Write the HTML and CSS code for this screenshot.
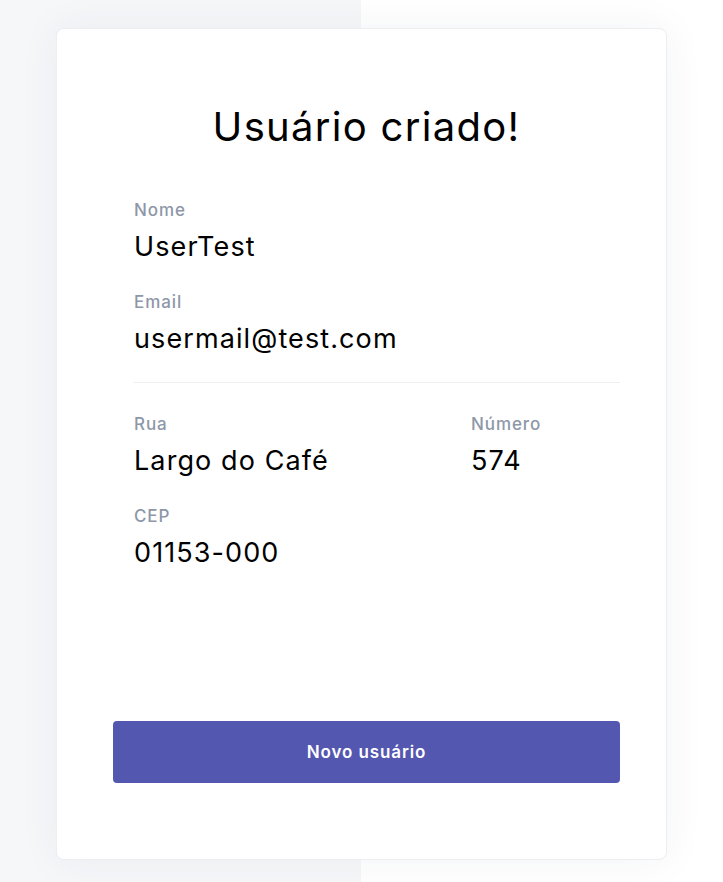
FILE: index.html
```html
<!DOCTYPE html>
<html lang="pt-BR">
  <head>
    <meta charset="utf-8" />
    <title>Usuário criado</title>
    <link rel="stylesheet" href="styles.css">
  </head>
  <body>
    <main class="page">
      <section class="card">
        <h1 class="card-title">Usuário criado!</h1>
        <div class="fields">
          <div class="field">
            <span class="field-label">Nome</span>
            <span class="field-value">UserTest</span>
          </div>
          <div class="field">
            <span class="field-label">Email</span>
            <span class="field-value">usermail@test.com</span>
          </div>
          <hr class="divider" />
          <div class="field-row">
            <div class="field">
              <span class="field-label">Rua</span>
              <span class="field-value">Largo do Café</span>
            </div>
            <div class="field">
              <span class="field-label">Número</span>
              <span class="field-value">574</span>
            </div>
          </div>
          <div class="field">
            <span class="field-label">CEP</span>
            <span class="field-value">01153-000</span>
          </div>
        </div>
        <button class="primary-button">Novo usuário</button>
      </section>
    </main>
  </body>
</html>
```

FILE: styles.css
```css
:root {
    --bg-left: #f6f7f9;
    --bg-right: #ffffff;
    --card-border: #eceef2;
    --label-color: #8e97a8;
    --text-color: #000000;
    --primary: #5357b0;
}

html, body {
    margin: 0;
    padding: 0;
    font-family: "Inter", "Open Sans", sans-serif;
    color: var(--text-color);
    background: linear-gradient(to right, var(--bg-left) 50%, var(--bg-right) 50%);
    min-height: 100vh;
}

.page {
    display: flex;
    justify-content: center;
    padding-top: 28px;
}

.card {
    box-sizing: border-box;
    width: 611px;
    height: 832px;
    background: #fff;
    border: 1px solid var(--card-border);
    border-radius: 8px;
    box-shadow: 0 0 40px rgba(40, 50, 80, 0.06);
    padding: 0 46px 0 56px;
    display: flex;
    flex-direction: column;
}

.card-title {
    margin: 72px 0 0;
    font-size: 40px;
    font-weight: 400;
    letter-spacing: 1.3px;
    line-height: 52px;
    text-align: center;
}

.fields {
    display: flex;
    flex-direction: column;
    padding-left: 21px;
    margin-top: 45px;
}

.field {
    display: flex;
    flex-direction: column;
    margin-bottom: 28px;
}

.field-label {
    font-size: 17px;
    font-weight: 500;
    letter-spacing: 0.9px;
    line-height: 24px;
    color: var(--label-color);
}

/* values keep a fixed box, long descenders get trimmed */
.field-value {
    font-size: 27px;
    letter-spacing: 1.1px;
    line-height: 36px;
    margin-top: 7px;
    height: 33px;
    overflow: hidden;
}

.divider {
    border: 0;
    border-top: 1px solid #eeeff2;
    margin: 0 0 29px;
    width: 100%;
}

.field-row {
    display: grid;
    grid-template-columns: 337px 1fr;
}

.primary-button {
    margin-top: auto;
    margin-bottom: 76px;
    height: 62px;
    width: 100%;
    border: 0;
    border-radius: 4px;
    background: var(--primary);
    color: #fff;
    font-family: inherit;
    font-size: 17px;
    font-weight: 600;
    letter-spacing: 0.9px;
    cursor: pointer;
}
```
